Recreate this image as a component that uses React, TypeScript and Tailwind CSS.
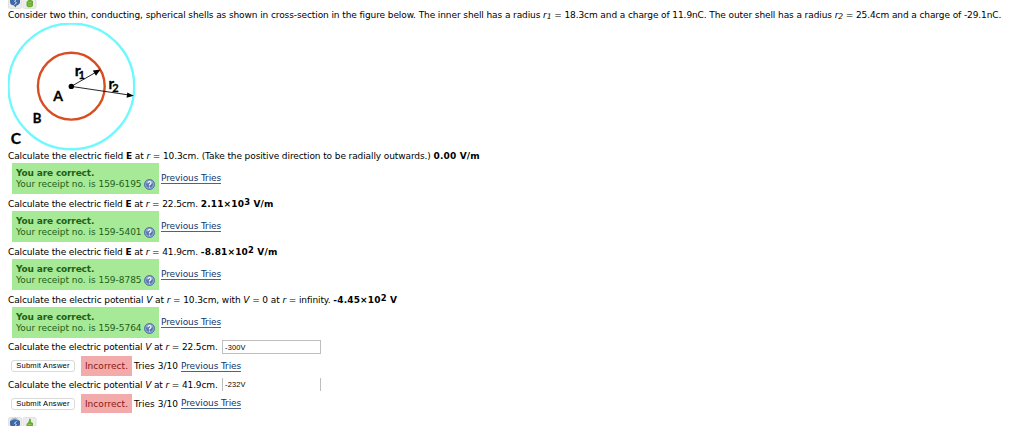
import React from "react";

function Figure() {
  return (
    <svg className="ml-2 block h-[128px] w-[127px] shrink-0" viewBox="8 23 127 128">
      <circle cx="71.3" cy="86.4" r="62.9" fill="none" stroke="#6ff9ff" strokeWidth="2.4" />
      <circle cx="71.3" cy="86.2" r="33.4" fill="none" stroke="#d84e22" strokeWidth="2.4" />
      <circle cx="71.3" cy="86.4" r="2.7" fill="#000" />
      <path d="M71.3 86.4 L96 72.2 M71.3 86.4 L129 95" stroke="#000" strokeWidth="0.85" />
      <path d="M100.5 69.4 L92.8 70.6 L96 75.8 Z M133.8 95.8 L127.3 92.6 L126.6 97.8 Z" fill="#000" />
      <g fontFamily="Lato, 'Liberation Sans', sans-serif" fontWeight="700" fill="#000" stroke="#000" strokeWidth="0.3">
        <text x="53.2" y="101" fontSize="14">A</text>
        <text x="32.8" y="123.2" fontSize="13.2">B</text>
        <text x="10.8" y="143.8" fontSize="15.5">C</text>
        <text x="74.8" y="76.4" fontSize="16">r<tspan dx="-2.2" dy="2.8" fontSize="11">1</tspan></text>
        <text x="108.5" y="89.2" fontSize="15">r<tspan dx="-1.8" dy="3" fontSize="11">2</tspan></text>
      </g>
    </svg>
  );
}

function Tools({ bottom = false }: { bottom?: boolean }) {
  return (
    <svg className="ml-2 block h-[9px] w-[30px] shrink-0" viewBox={bottom ? "0 0 30 9" : "0 5 30 9"}>
      <rect x="0.5" y="0.5" width="13" height="13" rx="1.5" fill="#ececec" stroke="#e2e2e2" />
      <rect x="15" y="0.5" width="13" height="13" rx="1.5" fill="#ececec" stroke="#e2e2e2" />
      <path d="M2 4 Q7 0 12 4 L12 8 Q10 10.5 8.5 10.5 L7.5 12.5 L6 10.5 Q2 10 2 7 Z" fill="#4267a7" />
      <path d="M3 3 Q7 0 10 3" fill="none" stroke="#a9b9c9" strokeWidth="1.4" />
      <path d="M8.5 4.5 L6.5 6 L8.5 8 L6.5 9.5" fill="none" stroke="#d7e4f8" strokeWidth="1" />
      <path d="M21.5 1.5 L22.8 2 L23 5 L25 6 L25 11 L23 12.3 L20 12.3 L18.5 11 L18.5 7 L20.5 5 Z" fill="#68ad2e" />
      <path d="M20 7.5 L23.5 7.5 M20 10 L23.5 10" stroke="#a4d36b" strokeWidth="0.7" />
    </svg>
  );
}

function Help() {
  return (
    <svg className="ml-[2px] h-[11px] w-[11px] shrink-0" viewBox="0 0 11 11">
      <circle cx="5.5" cy="5.5" r="5" fill="#5878b4" stroke="#47639a" strokeWidth="0.8" />
      <circle cx="5.5" cy="5.5" r="4" fill="none" stroke="#b8caec" strokeWidth="0.7" />
      <path d="M3.8 4.2 Q4 2.6 5.6 2.7 Q7.4 2.8 7 4.3 Q6.7 5.1 5.5 5.7 L5.5 6.6" fill="none" stroke="#fff" strokeWidth="1.2" />
      <circle cx="5.5" cy="8.1" r="0.7" fill="#fff" />
    </svg>
  );
}

function Line({ className, children }: { className: string; children: React.ReactNode }) {
  return <div className={`ml-2 flex shrink-0 items-center whitespace-pre ${className}`}><div>{children}</div></div>;
}

function PreviousTries() {
  return <a className="border-b border-[#486486] leading-[10px] tracking-[-0.1px] text-[#12356b]" href="#">Previous Tries</a>;
}

function Correct({ receipt, className }: { receipt: string; className: string }) {
  return (
    <div className={`ml-3 flex shrink-0 items-center gap-[2px] ${className}`}>
      <div className="flex h-full w-[147px] flex-col justify-center bg-[#a6e997] pl-1 text-[#225f16]">
        <div className="h-3 leading-3 tracking-[-0.16px]"><b>You are correct.</b></div>
        <div className="flex h-[11px] items-center whitespace-nowrap leading-[11px] tracking-[-0.03px]">
          Your receipt no. is {receipt}<Help />
        </div>
      </div>
      <PreviousTries />
    </div>
  );
}

function Incorrect({ className }: { className: string }) {
  return (
    <div className={`ml-[11px] flex shrink-0 items-center ${className}`}>
      <button className="h-3 w-[64px] whitespace-nowrap rounded-[3px] border border-[#d9d9d9] bg-white font-['Liberation_Sans',sans-serif] text-[7.6px] leading-[10px] tracking-[0.23px] text-black">Submit Answer</button>
      <div className="ml-[6px] flex h-full w-[51px] items-center justify-center bg-[#f2aaaa] tracking-[0.04px] text-[#8c1717]">Incorrect.</div>
      <span className="ml-[2px] w-[47px] whitespace-nowrap tracking-[0.04px]">Tries 3/10</span>
      <PreviousTries />
    </div>
  );
}

const Value = ({ children }: { children: React.ReactNode }) => <b className="tracking-[0.16px]">{children}</b>;
const Sup = ({ children }: { children: string }) => <span className="relative -top-[2px] text-[8.4px] leading-none">{children}</span>;
const Sub = ({ children }: { children: string }) => <i className="relative top-[1px] text-[7.6px] leading-none">{children}</i>;

function Answer({ value, className }: { value: string; className: string }) {
  return <input className={`w-[99px] border-[#bebebe] bg-white px-[2px] font-['Liberation_Sans',sans-serif] text-[7.4px] tracking-[0.2px] text-black outline-none ${className}`} defaultValue={value} />;
}

export default function App() {
  return (
    <main className="flex h-[426px] w-[1024px] flex-col overflow-hidden bg-white font-['DejaVu_Sans',sans-serif] text-[9px] leading-3 text-black">
      <Tools />
      <Line className="h-[14px] pb-[2px] tracking-[-0.096px]">Consider two thin, conducting, spherical shells as shown in cross-section in the figure below. The inner shell has a radius <i>r</i><Sub>1</Sub> = 18.3cm and a charge of 11.9nC. The outer shell has a radius <i>r</i><Sub>2</Sub> = 25.4cm and a charge of -29.1nC.</Line>
      <Figure />
      <Line className="-mt-px h-[13px] pb-px tracking-[-0.1px]">Calculate the electric field <b>E</b> at <i>r</i> = 10.3cm. (Take the positive direction to be radially outwards.) <Value>0.00 V/m</Value></Line>
      <Correct receipt="159-6195" className="h-[31px]" />
      <Line className="h-[17px] pt-[2px] tracking-[-0.12px]">Calculate the electric field <b>E</b> at <i>r</i> = 22.5cm. <Value>2.11×10<Sup>3</Sup> V/m</Value></Line>
      <Correct receipt="159-5401" className="h-[31px]" />
      <Line className="h-[17px] pt-[2px] tracking-[-0.12px]">Calculate the electric field <b>E</b> at <i>r</i> = 41.9cm. <Value>-8.81×10<Sup>2</Sup> V/m</Value></Line>
      <Correct receipt="159-8785" className="h-[31px]" />
      <Line className="h-[17px] pt-[2px] tracking-[-0.1px]">Calculate the electric potential <i>V</i> at <i>r</i> = 10.3cm, with <i>V</i> = 0 at <i>r</i> = infinity. <Value>-4.45×10<Sup>2</Sup> V</Value></Line>
      <Correct receipt="159-5764" className="h-[31px]" />
      <div className="ml-2 mt-[2px] flex h-[14px] shrink-0 items-center whitespace-pre">
        <span className="w-[214px] tracking-[-0.13px]">Calculate the electric potential <i>V</i> at <i>r</i> = 22.5cm.</span><Answer value="-300V" className="h-[14px] border" />
      </div>
      <Incorrect className="mt-[2px] h-5" />
      <div className="ml-2 mt-[2px] flex h-[13px] shrink-0 items-center whitespace-pre">
        <span className="w-[214px] tracking-[-0.13px]">Calculate the electric potential <i>V</i> at <i>r</i> = 41.9cm.</span><Answer value="-232V" className="h-[13px] border-x" />
      </div>
      <Incorrect className="mt-[3px] h-[19px]" />
      <div className="mt-1"><Tools bottom /></div>
    </main>
  );
}
